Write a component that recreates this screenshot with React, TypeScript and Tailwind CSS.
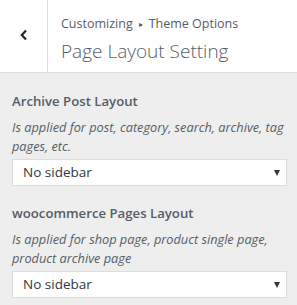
import React from "react";

const font = { fontFamily: '"Open Sans", "Noto Sans", sans-serif' };

function Select() {
  return (
    <div className="flex h-[27px] items-center justify-between border border-[#dddddd] bg-white pl-[10px] pr-[6px] text-[13.5px] text-[#32373c]">
      <span>No sidebar</span>
      <svg width="6" height="6" viewBox="0 0 6 6"><path d="M0 0h6L3 6z" fill="#32373c" /></svg>
    </div>
  );
}

function Control({ title, desc }: { title: string; desc: string }) {
  return (
    <div className="flex flex-col">
      <div className="text-[13.2px] font-semibold leading-[24px] text-[#555d66]">{title}</div>
      <div className="mt-[5px] text-[12.75px] italic leading-[19px] text-[#555d66]">{desc}</div>
      <div className="mt-[3px]">
        <Select />
      </div>
    </div>
  );
}

export default function App() {
  return (
    <div className="h-[305px] w-[297px] bg-[#eeeeee]" style={font}>
      <div className="flex h-[73px] border-b border-[#dddddd] bg-white">
        <div className="flex w-[48px] items-center justify-center border-r border-[#dddddd]">
          <svg width="10" height="12" viewBox="0 0 10 12" className="mt-[-2px]">
            <path d="M7 1.5L2.8 6L7 10.5" stroke="#23282d" strokeWidth="2.2" fill="none" />
          </svg>
        </div>
        <div className="flex flex-col pl-[13px] pt-[14px]">
          <div className="flex items-center text-[12.5px] leading-[20px] text-[#555d66]">
            <span>Customizing</span>
            <span className="mx-[6px] text-[8px]">▸</span>
            <span>Theme Options</span>
          </div>
          <div className="mt-[3px] text-[19px] font-light leading-[28px] text-[#555d66]">Page Layout Setting</div>
        </div>
      </div>
      <div className="flex flex-col gap-[15px] pl-[12px] pr-[10px] pt-[16px]">
        <Control title="Archive Post Layout" desc="Is applied for post, category, search, archive, tag pages, etc." />
        <Control title="woocommerce Pages Layout" desc="Is applied for shop page, product single page, product archive page" />
      </div>
    </div>
  );
}
